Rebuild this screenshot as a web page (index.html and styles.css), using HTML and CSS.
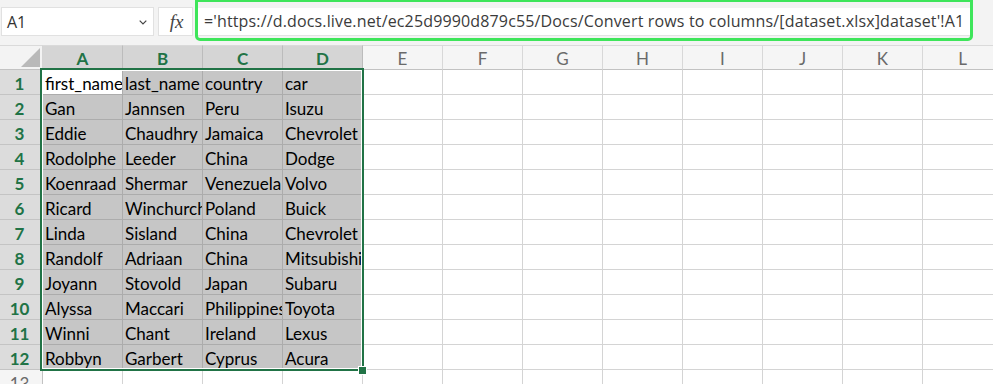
FILE: index.html
```html
<!DOCTYPE html>
<html>
<head>
<meta charset="utf-8">
<link rel="stylesheet" href="styles.css">
</head>
<body>
<div class="app">
  <div class="topbar">
    <div class="namebox">
      <span class="ref">A1</span>
      <svg class="chev" width="8" height="5" viewBox="0 0 8 5"><path d="M0.7 0.7 L4 4 L7.3 0.7" fill="none" stroke="#444" stroke-width="1.2"/></svg>
    </div>
    <div class="fxbox"><span class="fx">fx</span></div>
    <div class="formula">
      <div class="field">='https://d.docs.live.net/ec25d9990d879c55/Docs/Convert rows to columns/[dataset.xlsx]dataset'!A1</div>
    </div>
  </div>
  <div class="sheetwrap">
    <div class="sheet">
      <div class="corner"><span class="tri"></span></div>
      <div class="ch sel">A</div><div class="ch sel">B</div><div class="ch sel">C</div><div class="ch sel">D</div>
      <div class="ch">E</div><div class="ch">F</div><div class="ch">G</div><div class="ch">H</div><div class="ch">I</div><div class="ch">J</div><div class="ch">K</div><div class="ch">L</div>

      <div class="rh sel">1</div>
      <div class="c active">first_name</div><div class="c s">last_name</div><div class="c s">country</div><div class="c s">car</div>
      <div class="c"></div><div class="c"></div><div class="c"></div><div class="c"></div><div class="c"></div><div class="c"></div><div class="c"></div><div class="c"></div>

      <div class="rh sel">2</div>
      <div class="c s">Gan</div><div class="c s">Jannsen</div><div class="c s">Peru</div><div class="c s">Isuzu</div>
      <div class="c"></div><div class="c"></div><div class="c"></div><div class="c"></div><div class="c"></div><div class="c"></div><div class="c"></div><div class="c"></div>

      <div class="rh sel">3</div>
      <div class="c s">Eddie</div><div class="c s">Chaudhry</div><div class="c s">Jamaica</div><div class="c s">Chevrolet</div>
      <div class="c"></div><div class="c"></div><div class="c"></div><div class="c"></div><div class="c"></div><div class="c"></div><div class="c"></div><div class="c"></div>

      <div class="rh sel">4</div>
      <div class="c s">Rodolphe</div><div class="c s">Leeder</div><div class="c s">China</div><div class="c s">Dodge</div>
      <div class="c"></div><div class="c"></div><div class="c"></div><div class="c"></div><div class="c"></div><div class="c"></div><div class="c"></div><div class="c"></div>

      <div class="rh sel">5</div>
      <div class="c s">Koenraad</div><div class="c s">Shermar</div><div class="c s">Venezuela</div><div class="c s">Volvo</div>
      <div class="c"></div><div class="c"></div><div class="c"></div><div class="c"></div><div class="c"></div><div class="c"></div><div class="c"></div><div class="c"></div>

      <div class="rh sel">6</div>
      <div class="c s">Ricard</div><div class="c s">Winchurch</div><div class="c s">Poland</div><div class="c s">Buick</div>
      <div class="c"></div><div class="c"></div><div class="c"></div><div class="c"></div><div class="c"></div><div class="c"></div><div class="c"></div><div class="c"></div>

      <div class="rh sel">7</div>
      <div class="c s">Linda</div><div class="c s">Sisland</div><div class="c s">China</div><div class="c s">Chevrolet</div>
      <div class="c"></div><div class="c"></div><div class="c"></div><div class="c"></div><div class="c"></div><div class="c"></div><div class="c"></div><div class="c"></div>

      <div class="rh sel">8</div>
      <div class="c s">Randolf</div><div class="c s">Adriaan</div><div class="c s">China</div><div class="c s">Mitsubishi</div>
      <div class="c"></div><div class="c"></div><div class="c"></div><div class="c"></div><div class="c"></div><div class="c"></div><div class="c"></div><div class="c"></div>

      <div class="rh sel">9</div>
      <div class="c s">Joyann</div><div class="c s">Stovold</div><div class="c s">Japan</div><div class="c s">Subaru</div>
      <div class="c"></div><div class="c"></div><div class="c"></div><div class="c"></div><div class="c"></div><div class="c"></div><div class="c"></div><div class="c"></div>

      <div class="rh sel">10</div>
      <div class="c s">Alyssa</div><div class="c s">Maccari</div><div class="c s">Philippines</div><div class="c s">Toyota</div>
      <div class="c"></div><div class="c"></div><div class="c"></div><div class="c"></div><div class="c"></div><div class="c"></div><div class="c"></div><div class="c"></div>

      <div class="rh sel">11</div>
      <div class="c s">Winni</div><div class="c s">Chant</div><div class="c s">Ireland</div><div class="c s">Lexus</div>
      <div class="c"></div><div class="c"></div><div class="c"></div><div class="c"></div><div class="c"></div><div class="c"></div><div class="c"></div><div class="c"></div>

      <div class="rh sel">12</div>
      <div class="c s">Robbyn</div><div class="c s">Garbert</div><div class="c s">Cyprus</div><div class="c s">Acura</div>
      <div class="c"></div><div class="c"></div><div class="c"></div><div class="c"></div><div class="c"></div><div class="c"></div><div class="c"></div><div class="c"></div>

      <div class="rh">13</div>
      <div class="c"></div><div class="c"></div><div class="c"></div><div class="c"></div>
      <div class="c"></div><div class="c"></div><div class="c"></div><div class="c"></div><div class="c"></div><div class="c"></div><div class="c"></div><div class="c"></div>
    </div>
    <div class="selection"></div>
    <div class="handle"></div>
  </div>
</div>
</body>
</html>
```
FILE: styles.css
```css
html, body {
  margin: 0;
  padding: 0;
  background: #ffffff;
}
.app {
  width: 993px;
  height: 384px;
  overflow: hidden;
  position: relative;
}
.topbar {
  height: 45px;
  background: #f3f3f3;
  display: flex;
  align-items: flex-start;
}
.namebox {
  margin-top: 7px;
  margin-left: 1px;
  width: 153px;
  height: 29px;
  box-sizing: border-box;
  border: 1px solid #e1e1e1;
  background: #fff;
  display: flex;
  align-items: center;
  justify-content: space-between;
  padding: 0 6px 0 5px;
}
.ref {
  font-family: "Open Sans", sans-serif;
  font-size: 16px;
  color: #333;
  padding-top: 1px;
}
.chev {
  display: block;
  margin-top: 1px;
}
.fxbox {
  margin-top: 7px;
  margin-left: 4px;
  width: 35px;
  height: 29px;
  box-sizing: border-box;
  border: 1px solid #e1e1e1;
  background: #fff;
  display: flex;
  align-items: center;
  justify-content: center;
}
.fx {
  font-family: "Liberation Serif", serif;
  font-style: italic;
  font-size: 19px;
  color: #444;
  margin-left: 2px;
}
.formula {
  margin-top: -1px;
  margin-left: 2px;
  width: 778px;
  height: 42px;
  box-sizing: border-box;
  border: 3px solid #3ee55a;
  border-radius: 0 0 5px 5px;
  background: #f3f3f3;
  padding-top: 6px;
}
.field {
  height: 28px;
  box-sizing: border-box;
  background: #fff;
  border-bottom: 1px solid #e3e3e3;
  font-family: "Open Sans", sans-serif;
  font-size: 16px;
  letter-spacing: 0.15px;
  line-height: 27px;
  color: #3b3b3b;
  padding-left: 6px;
  padding-top: 0;
  white-space: nowrap;
}
.sheetwrap {
  position: relative;
}
.sheet {
  display: grid;
  grid-template-columns: 43px repeat(12, 80px);
  grid-template-rows: 25px repeat(13, 25px);
  width: 1003px;
}
.corner {
  background: #f3f3f3;
  border-top: 1px solid #dadada;
  border-bottom: 1px solid #c2c2c2;
  border-right: 1px solid #d4d4d4;
  box-sizing: border-box;
  position: relative;
}
.tri {
  position: absolute;
  right: 2px;
  bottom: 2px;
  width: 0;
  height: 0;
  border-left: 19px solid transparent;
  border-bottom: 19px solid #b9b9b9;
}
.ch {
  box-sizing: border-box;
  background: #f5f5f5;
  border-top: 1px solid #dadada;
  border-bottom: 1px solid #c2c2c2;
  border-right: 1px solid #d8d8d8;
  font-family: Lato, sans-serif;
  font-size: 17px;
  color: #6a6a6a;
  text-align: center;
  line-height: 24px;
  padding-top: 1px;
}
.ch.sel {
  background: #d5d5d5;
  border-right-color: #bcbcbc;
  color: #217346;
  font-weight: 700;
}
.rh {
  box-sizing: border-box;
  background: #f5f5f5;
  border-bottom: 1px solid #d4d4d4;
  border-right: 1px solid #c2c2c2;
  font-family: Lato, sans-serif;
  font-size: 17px;
  color: #6a6a6a;
  text-align: center;
  line-height: 24px;
  padding-top: 2px;
  padding-right: 3px;
}
.rh.sel {
  background: #dcdcdc;
  border-bottom-color: #c4c4c4;
  color: #217346;
  font-weight: 700;
}
.c {
  box-sizing: border-box;
  border-right: 1px solid #d4d4d4;
  border-bottom: 1px solid #d4d4d4;
  font-family: Lato, sans-serif;
  font-size: 17px;
  line-height: 24px;
  padding: 2px 0 0 2px;
  color: #000;
  white-space: nowrap;
  overflow: hidden;
}
.c.s {
  background: #c6c6c6;
  border-right-color: #acacac;
  border-bottom-color: #acacac;
}
.c.active {
  background: #ffffff;
  border-right-color: #acacac;
  border-bottom-color: #acacac;
}
.selection {
  position: absolute;
  left: 40px;
  top: 23px;
  width: 324px;
  height: 303px;
  box-sizing: border-box;
  border: 2px solid #217346;
  box-shadow: inset 0 0 0 1px #ffffff;
  pointer-events: none;
}
.handle {
  position: absolute;
  left: 359px;
  top: 322px;
  width: 7px;
  height: 7px;
  background: #217346;
  box-shadow: 0 0 0 1px #ffffff;
}
```
